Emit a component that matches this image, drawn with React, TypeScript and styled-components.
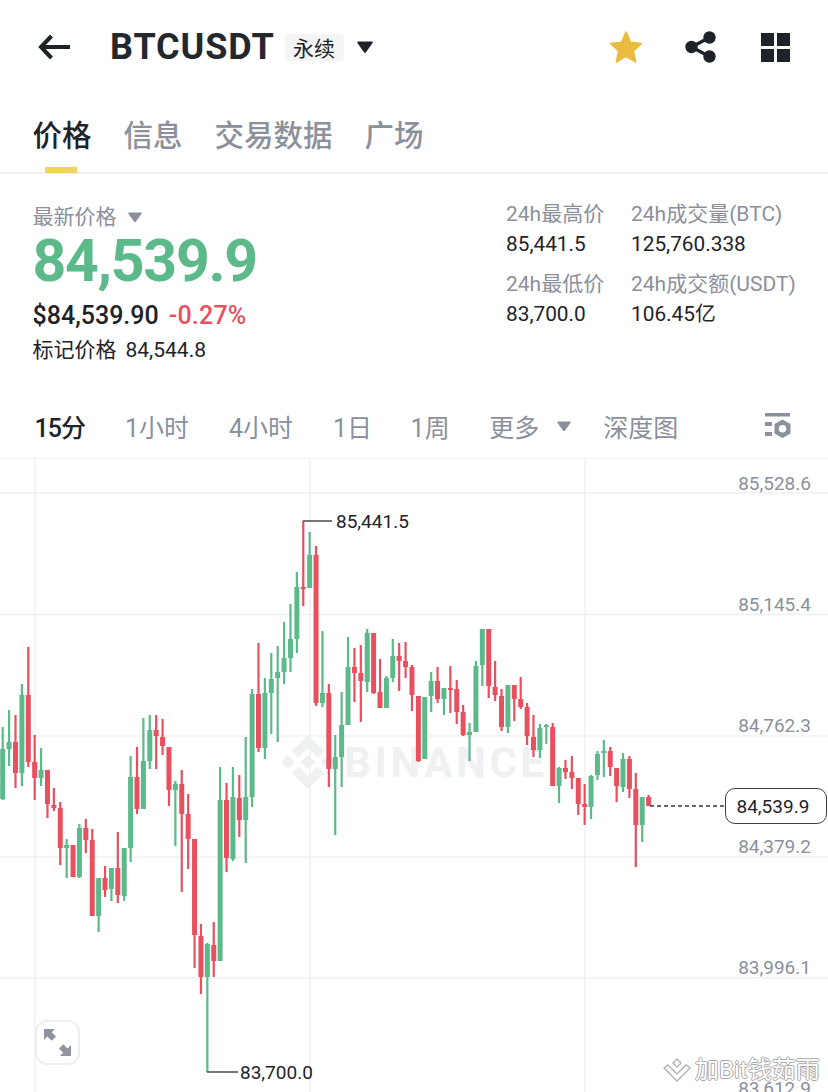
import React from 'react';
import styled, { createGlobalStyle } from 'styled-components';

const GlobalStyle = createGlobalStyle`
	html, body {
		margin: 0;
		padding: 0;
		background: #fff;
		overflow: hidden;
	}
	* {
		box-sizing: border-box;
	}
`;

const FONT = `Roboto, "Noto Sans CJK SC", sans-serif`;
const DARK = '#1e2329';
const GREY = '#8b909c';
const GREEN = '#5bb98a';
const RED = '#e8505f';
const LINE = '#eff0f2';

const Page = styled.div`
	width: 828px;
	height: 1092px;
	display: flex;
	flex-direction: column;
	font-family: ${FONT};
	color: ${DARK};
	overflow: hidden;
`;

const Header = styled.header`
	height: 94px;
	display: flex;
	align-items: center;
	padding: 0 38px 0 37px;
`;

const Title = styled.h1`
	margin: 0 0 0 39px;
	font-size: 36px;
	font-weight: 700;
	letter-spacing: 0.9px;
	color: #23272e;
`;

const Badge = styled.span`
	margin-left: 10px;
	width: 59px;
	height: 27px;
	display: flex;
	align-items: center;
	justify-content: center;
	background: #f5f5f5;
	border-radius: 4px;
	font-size: 21px;
`;

const CaretSlot = styled.span<{ $left: number }>`
	margin-left: ${(p) => p.$left}px;
	display: flex;
`;

const HeaderActions = styled.div`
	margin-left: auto;
	display: flex;
	align-items: center;
	gap: 45px;
`;

const StarSlot = styled.span`
	display: flex;
	margin-right: -3px;
`;

const Tabs = styled.nav`
	height: 80px;
	display: flex;
	gap: 32px;
	padding: 0 32.5px;
	border-bottom: 2px solid ${LINE};
`;

const Tab = styled.div<{ $active?: boolean }>`
	position: relative;
	padding-top: 20px;
	font-size: 29.5px;
	line-height: 44px;
	font-weight: 500;
	color: ${(p) => (p.$active ? DARK : GREY)};

	&::after {
		content: '';
		display: ${(p) => (p.$active ? 'block' : 'none')};
		position: absolute;
		left: 12.5px;
		bottom: -1px;
		width: 32px;
		height: 6px;
		background: #f0d361;
	}
`;

const Stats = styled.section`
	height: 216px;
	display: flex;
	justify-content: space-between;
	padding: 26px 0 0 32.5px;
`;

const PriceColumn = styled.div`
	display: flex;
	flex-direction: column;
`;

const PriceLabel = styled.div`
	display: flex;
	align-items: center;
	gap: 11px;
	font-size: 21px;
	line-height: 34px;
	color: ${GREY};
`;

const BigPrice = styled.div`
	font-size: 59px;
	line-height: 52px;
	margin-top: 1px;
	font-weight: 700;
	letter-spacing: -1.3px;
	color: ${GREEN};
`;

const FiatRow = styled.div`
	display: flex;
	gap: 10px;
	margin-top: 14px;
	font-size: 25px;
	line-height: 30px;
	font-weight: 500;
`;

const Change = styled.span`
	color: ${RED};
	letter-spacing: 0.2px;
`;

const MarkRow = styled.div`
	display: flex;
	gap: 9px;
	margin-top: 4px;
	font-size: 21px;
	line-height: 30px;
`;

const StatsGrid = styled.div`
	display: grid;
	grid-template-columns: 125px 197px;
	align-content: start;
	margin-top: -1px;
`;

const StatLabel = styled.div`
	font-size: 21px;
	line-height: 30px;
	white-space: nowrap;
	color: ${GREY};
`;

const StatValue = styled.div`
	font-size: 20.8px;
	line-height: 30px;
	white-space: nowrap;
	margin-bottom: 10px;
`;

const Intervals = styled.nav`
	height: 68px;
	display: flex;
	align-items: center;
	padding: 4px 35px 0 34.5px;
	font-size: 25px;
	color: ${GREY};
`;

const Interval = styled.span<{ $active?: boolean; $gap?: number; $left?: number }>`
	color: ${(p) => (p.$active ? DARK : GREY)};
	font-weight: ${(p) => (p.$active ? 500 : 400)};
	letter-spacing: ${(p) => (p.$active ? '-1px' : '0')};
	margin-left: ${(p) => p.$left ?? 0}px;
	margin-right: ${(p) => p.$gap ?? 40}px;
	white-space: nowrap;
`;

const IntervalIcon = styled.span`
	margin-left: auto;
	display: flex;
`;

const Chart = styled.div`
	position: relative;
	flex: 1;
	overflow: hidden;
`;

const ChartSvg = styled.svg`
	display: block;
	width: 828px;
	height: 634px;
`;

const AxisLabel = styled.span<{ $top: number }>`
	position: absolute;
	right: 17px;
	top: ${(p) => p.$top}px;
	font-size: 19px;
	line-height: 20px;
	color: ${GREY};
`;

const ExtremeLabel = styled.span<{ $top: number; $left: number }>`
	position: absolute;
	left: ${(p) => p.$left}px;
	top: ${(p) => p.$top}px;
	font-size: 19px;
	line-height: 20px;
	color: ${DARK};
`;

const PriceTag = styled.div`
	position: absolute;
	left: 725px;
	top: 330px;
	width: 102px;
	height: 36px;
	display: flex;
	align-items: center;
	padding-left: 10.5px;
	background: #fff;
	border: 1.5px solid #3a3f46;
	border-radius: 10px;
	font-size: 19px;
`;

const ExpandButton = styled.div`
	position: absolute;
	left: 35px;
	top: 562px;
	width: 45px;
	height: 45px;
	display: flex;
	align-items: center;
	justify-content: center;
	border: 2px solid #eceef1;
	border-radius: 12px;
	background: #fff;
`;

const Credit = styled.div`
	position: absolute;
	left: 663px;
	top: 598px;
	display: flex;
	align-items: center;
	gap: 4px;
	font-size: 24px;
	line-height: 28px;
	white-space: nowrap;
	color: #fff;
	text-shadow: 1px 0 0 #a9a9a9, -1px 0 0 #a9a9a9, 0 1px 0 #a9a9a9, 0 -1px 0 #a9a9a9;
`;

// colour, high, body top, body bottom, low (page y coordinates)
type Candle = ['g' | 'r', number, number, number, number];

const candles: Candle[] = [
	['g', 727, 749, 799, 800], ['g', 710, 742, 749, 766], ['r', 715, 742, 773, 788], ['g', 684, 695, 773, 786],
	['r', 647, 695, 762, 767], ['r', 735, 762, 778, 800], ['g', 748, 770, 778, 786], ['r', 770, 770, 804, 818],
	['r', 788, 805, 808, 811], ['r', 802, 808, 848, 865], ['g', 839, 845, 848, 878], ['r', 845, 845, 877, 877],
	['g', 824, 828, 877, 878], ['r', 819, 828, 840, 853], ['r', 829, 840, 916, 916], ['g', 878, 878, 916, 932],
	['r', 866, 878, 890, 897], ['g', 868, 868, 889, 901], ['r', 832, 868, 895, 903], ['g', 848, 848, 896, 901],
	['g', 756, 777, 848, 862], ['r', 747, 777, 809, 814], ['g', 718, 761, 809, 809], ['g', 715, 730, 761, 769],
	['r', 715, 730, 736, 769], ['r', 719, 737, 746, 755], ['r', 747, 747, 790, 806], ['g', 781, 784, 790, 846],
	['r', 770, 784, 814, 892], ['r', 794, 814, 839, 869], ['r', 839, 839, 935, 968], ['r', 924, 936, 977, 994],
	['g', 943, 944, 977, 1072], ['r', 922, 945, 961, 977], ['g', 767, 800, 961, 961], ['r', 783, 800, 858, 872],
	['g', 767, 797, 859, 861], ['r', 775, 798, 820, 837], ['g', 737, 797, 820, 863], ['g', 689, 694, 797, 807],
	['r', 643, 694, 748, 752], ['g', 678, 693, 748, 759], ['g', 653, 679, 693, 734], ['g', 646, 672, 678, 742],
	['g', 622, 658, 672, 684], ['g', 604, 639, 658, 672], ['g', 572, 587, 639, 653], ['r', 521, 587, 588, 606],
	['g', 532, 555, 588, 588], ['r', 546, 555, 703, 706], ['g', 631, 693, 703, 707], ['r', 684, 693, 769, 787],
	['g', 735, 757, 769, 835], ['g', 692, 725, 757, 787], ['g', 637, 667, 725, 725], ['r', 648, 667, 673, 702],
	['r', 645, 673, 681, 722], ['g', 629, 633, 682, 692], ['r', 633, 633, 693, 694], ['r', 659, 692, 708, 708],
	['g', 676, 678, 708, 708], ['g', 639, 656, 678, 682], ['r', 643, 656, 661, 691], ['r', 642, 661, 667, 678],
	['r', 665, 667, 695, 711], ['r', 696, 696, 761, 762], ['g', 697, 697, 759, 759], ['g', 672, 681, 696, 712],
	['r', 667, 681, 699, 703], ['g', 688, 688, 699, 715], ['r', 666, 688, 689, 713], ['r', 680, 689, 712, 724],
	['r', 705, 712, 735, 736], ['g', 723, 732, 735, 761], ['g', 661, 666, 732, 732], ['g', 629, 629, 665, 686],
	['r', 629, 629, 686, 698], ['r', 661, 687, 695, 701], ['r', 689, 696, 727, 731], ['g', 685, 685, 727, 733],
	['r', 685, 685, 699, 721], ['r', 677, 699, 707, 709], ['r', 703, 707, 736, 745], ['r', 715, 737, 750, 757],
	['g', 724, 728, 750, 758], ['g', 724, 725, 727, 744], ['r', 723, 727, 786, 786], ['g', 767, 768, 786, 803],
	['r', 760, 768, 772, 779], ['r', 756, 772, 778, 789], ['r', 778, 778, 804, 815], ['r', 784, 804, 807, 825],
	['g', 775, 776, 807, 819], ['g', 751, 754, 775, 780], ['g', 740, 751, 753, 777], ['r', 747, 751, 767, 776],
	['r', 768, 768, 786, 802], ['g', 753, 759, 787, 792], ['r', 756, 759, 789, 798], ['r', 773, 789, 825, 867],
	['g', 797, 797, 825, 842], ['r', 795, 797, 806, 806],
];

const gridRows = [458.5, 493, 614.5, 736, 857, 978];
const gridCols = [35, 310, 585];
const axisLabels: [string, number][] = [
	['85,528.6', 16],
	['85,145.4', 137],
	['84,762.3', 258],
	['84,379.2', 379],
	['83,996.1', 500],
	['83,612.9', 621],
];

const Caret = ({ size, color }: { size: number; color: string }) => (
	<svg width={size} height={size * 0.75} viewBox="0 0 16 12">
		<path d="M1.2 .5h13.6a1 1 0 0 1 .8 1.6L9 11.2a1.2 1.2 0 0 1-2 0L.4 2.1A1 1 0 0 1 1.2 .5z" fill={color} />
	</svg>
);

const BackIcon = () => (
	<svg width="34" height="30" viewBox="0 0 34 30" fill="none" stroke={DARK} strokeWidth="4">
		<path d="M33 15H4M14.5 4L4 15l10.5 11" />
	</svg>
);

const StarIcon = () => (
	<svg width="34" height="34" viewBox="0 0 34 34">
		<path
			d="M17 2l4.6 10.3 11 1.2-8.2 7.5 2.3 11L17 26.4 7.3 32l2.3-11-8.2-7.5 11-1.2z"
			fill="#e9bb3f"
			stroke="#e9bb3f"
			strokeWidth="1.5"
			strokeLinejoin="round"
		/>
	</svg>
);

const ShareIcon = () => (
	<svg width="31" height="32" viewBox="0 0 31 32" fill={DARK}>
		<circle cx="24.5" cy="6.5" r="6.2" />
		<circle cx="6.5" cy="16" r="6.2" />
		<circle cx="24.5" cy="25.5" r="6.2" />
		<path d="M6.5 16L24.5 6.5M6.5 16l18 9.5" stroke={DARK} strokeWidth="3.4" />
	</svg>
);

const GridIcon = () => (
	<svg width="29" height="29" viewBox="0 0 29 29" fill={DARK}>
		<rect x="0" y="0" width="13" height="13" />
		<rect x="16" y="0" width="13" height="13" />
		<rect x="0" y="16" width="13" height="13" />
		<rect x="16" y="16" width="13" height="13" />
	</svg>
);

const IndicatorIcon = () => (
	<svg width="28" height="26" viewBox="0 0 28 26" fill="#8b909c">
		<rect x="0" y="0" width="25" height="3.5" />
		<rect x="0" y="9" width="7" height="4" />
		<rect x="0" y="19" width="7" height="4" />
		<path
			fillRule="evenodd"
			d="M17.5 6.5l8 4.6v9.3l-8 4.6-8-4.6v-9.3zM17.5 12a3.7 3.7 0 1 0 0 7.5 3.7 3.7 0 0 0 0-7.5z"
		/>
	</svg>
);

const ExpandIcon = () => (
	<svg width="27" height="27" viewBox="0 0 27 27" fill="#8f94a0">
		<path d="M0 0h11L7.8 3.2l4.2 4.2-4.4 4.4-4.2-4.2L0 11z" />
		<path d="M27 27H16l3.2-3.2-4.2-4.2 4.4-4.4 4.2 4.2L27 16z" />
	</svg>
);

const BinanceMark = ({ cx, cy, r, color }: { cx: number; cy: number; r: number; color: string }) => {
	const u = r / 27;
	const pts = [
		`M0 -27L16 -11L9.5 -4.5L0 -14L-9.5 -4.5L-16 -11Z`,
		`M0 27L16 11L9.5 4.5L0 14L-9.5 4.5L-16 11Z`,
		`M-27 0L-20 -7L-13 0L-20 7Z`,
		`M27 0L20 -7L13 0L20 7Z`,
		`M0 -7L7 0L0 7L-7 0Z`,
	];
	return (
		<g transform={`translate(${cx} ${cy}) scale(${u})`} fill={color}>
			{pts.map((d) => (
				<path key={d} d={d} />
			))}
		</g>
	);
};

const CreditMark = () => (
	<svg width="28" height="24" viewBox="0 0 28 24" fill="none" stroke="#b4b4b4" strokeWidth="1.4">
		<path d="M14 1l4 4-4 4-4-4zM1 10l4-3 9 9 9-9 4 3-13 13z" />
	</svg>
);

const ChartDrawing = () => (
	<ChartSvg viewBox="0 458 828 634">
		{gridRows.map((y) => (
			<line key={y} x1="0" x2="828" y1={y} y2={y} stroke={LINE} strokeWidth="1.5" />
		))}
		{gridCols.map((x) => (
			<line key={x} x1={x} x2={x} y1="458" y2="1092" stroke={LINE} strokeWidth="1.5" />
		))}
		<BinanceMark cx={308} cy={762} r={27} color="#eef0f2" />
		<text x="344" y="777" fontFamily={FONT} fontSize="42" fontWeight="700" letterSpacing="3.7" fill="#eef0f2">
			BINANCE
		</text>
		{candles.map(([c, hi, top, bot, lo], i) => {
			const x = 2.7 + 6.395 * i;
			const fill = c === 'g' ? GREEN : RED;
			return (
				<g key={i} fill={fill}>
					<rect x={x - 1.1} y={hi} width="2.2" height={lo - hi} />
					<rect x={x - 2.5} y={top} width="5" height={Math.max(bot - top, 2)} />
				</g>
			);
		})}
		<path d="M303 521H332M207 1072H238" stroke="#474c53" strokeWidth="1.3" fill="none" />
		<line x1="650" x2="725" y1="806" y2="806" stroke="#33373d" strokeWidth="1.4" strokeDasharray="4 3" />
	</ChartSvg>
);

export default function App(): JSX.Element {
	return (
		<Page>
			<GlobalStyle />
			<Header>
				<BackIcon />
				<Title>BTCUSDT</Title>
				<Badge>永续</Badge>
				<CaretSlot $left={13}>
					<Caret size={16} color={DARK} />
				</CaretSlot>
				<HeaderActions>
					<StarSlot>
						<StarIcon />
					</StarSlot>
					<ShareIcon />
					<GridIcon />
				</HeaderActions>
			</Header>
			<Tabs>
				<Tab $active>价格</Tab>
				<Tab>信息</Tab>
				<Tab>交易数据</Tab>
				<Tab>广场</Tab>
			</Tabs>
			<Stats>
				<PriceColumn>
					<PriceLabel>
						最新价格
						<Caret size={14} color={GREY} />
					</PriceLabel>
					<BigPrice>84,539.9</BigPrice>
					<FiatRow>
						<span>$84,539.90</span>
						<Change>-0.27%</Change>
					</FiatRow>
					<MarkRow>
						<span>标记价格</span>
						<span>84,544.8</span>
					</MarkRow>
				</PriceColumn>
				<StatsGrid>
					<StatLabel>24h最高价</StatLabel>
					<StatLabel>24h成交量(BTC)</StatLabel>
					<StatValue>85,441.5</StatValue>
					<StatValue>125,760.338</StatValue>
					<StatLabel>24h最低价</StatLabel>
					<StatLabel>24h成交额(USDT)</StatLabel>
					<StatValue>83,700.0</StatValue>
					<StatValue>106.45亿</StatValue>
				</StatsGrid>
			</Stats>
			<Intervals>
				<Interval $active>15分</Interval>
				<Interval>1小时</Interval>
				<Interval>4小时</Interval>
				<Interval $gap={38.5}>1日</Interval>
				<Interval $gap={39.5}>1周</Interval>
				<Interval $gap={18}>更多</Interval>
				<Caret size={14} color={GREY} />
				<Interval $left={32}>深度图</Interval>
				<IntervalIcon>
					<IndicatorIcon />
				</IntervalIcon>
			</Intervals>
			<Chart>
				<ChartDrawing />
				{axisLabels.map(([text, top]) => (
					<AxisLabel key={text} $top={top}>
						{text}
					</AxisLabel>
				))}
				<ExtremeLabel $left={336} $top={54}>
					85,441.5
				</ExtremeLabel>
				<ExtremeLabel $left={240} $top={605}>
					83,700.0
				</ExtremeLabel>
				<PriceTag>84,539.9</PriceTag>
				<ExpandButton>
					<ExpandIcon />
				</ExpandButton>
				<Credit>
					<CreditMark />
					加Bit钱茹雨
				</Credit>
			</Chart>
		</Page>
	);
}
